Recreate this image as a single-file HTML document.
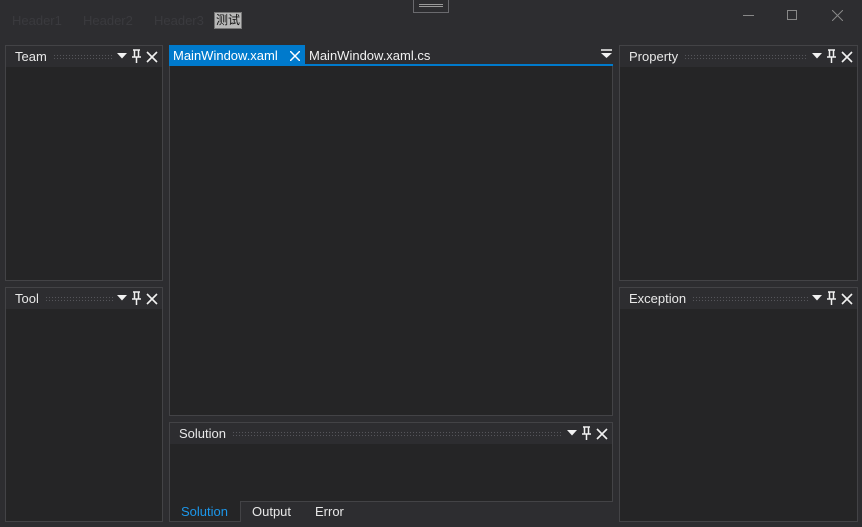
<!DOCTYPE html>
<html><head><style>
*{margin:0;padding:0;box-sizing:border-box}
body{width:862px;height:527px;background:#2d2d30;font-family:"Liberation Sans","Noto Sans CJK SC",sans-serif;font-size:13px;color:#f1f1f1;position:relative;overflow:hidden}
.a{position:absolute}
.panel{position:absolute;border:1px solid #434346;background:#252526}
.hd{position:absolute;left:0;right:0;top:0;height:21px;background:#2d2d30;display:flex;align-items:center;padding-left:9px}
.hd .t{color:#e8e8e8;margin-right:6px}
.hd .dots{flex:1;height:6px;background-image:radial-gradient(#55555a 0.6px,transparent 0.8px);background-size:3px 3px;margin-right:4px}
.hd svg{margin-right:4px}
.menu{font-size:13px;color:#3a3a3e;position:absolute;top:13px}
</style></head><body>
<div class="menu" style="left:12px">Header1</div>
<div class="menu" style="left:83px">Header2</div>
<div class="menu" style="left:154px">Header3</div>
<div class="a" style="left:214px;top:12px;width:28px;height:17px;background:#b8b8b8;border:1px solid #777;color:#111;font-size:12px;line-height:15px;text-align:center">测试</div>
<div class="a" style="left:413px;top:0;width:36px;height:13px;border:1px solid #6a6a6e;border-top:none"><div class="a" style="left:5px;top:4px;width:24px;height:3px;border-top:1px solid #999;border-bottom:1px solid #999"></div></div>
<div class="a" style="left:743px;top:15px;width:11px;height:1px;background:#888"></div>
<div class="a" style="left:787px;top:10px;width:10px;height:10px;border:1px solid #888"></div>
<svg class="a" style="left:832px;top:10px" width="11" height="11"><path d="M0 0L11 11M11 0L0 11" stroke="#888" stroke-width="1"/></svg>

<svg width="0" height="0" style="position:absolute"><defs>
<g id="icons"><path d="M0 4h10l-5 5.5z" fill="#f1f1f1"/><path d="M16 1h7M17.5 1v7h4V1M15 8h9M19.5 8v6" stroke="#f1f1f1" stroke-width="1.5" fill="none"/><path d="M30 3l10 10M40 3l-10 10" stroke="#f1f1f1" stroke-width="1.6"/></g>
</defs></svg>

<div class="panel" style="left:5px;top:45px;width:158px;height:236px"><div class="hd"><span class="t">Team</span><span class="dots"></span><svg width="41" height="15"><use href="#icons"/></svg></div></div>
<div class="panel" style="left:5px;top:287px;width:158px;height:235px"><div class="hd"><span class="t">Tool</span><span class="dots"></span><svg width="41" height="15"><use href="#icons"/></svg></div></div>
<div class="panel" style="left:619px;top:45px;width:239px;height:236px"><div class="hd"><span class="t">Property</span><span class="dots"></span><svg width="41" height="15"><use href="#icons"/></svg></div></div>
<div class="panel" style="left:619px;top:287px;width:239px;height:235px"><div class="hd"><span class="t">Exception</span><span class="dots"></span><svg width="41" height="15"><use href="#icons"/></svg></div></div>

<div class="a" style="left:169px;top:45px;width:136px;height:20px;background:#007acc;color:#fff;padding:3px 0 0 4px">MainWindow.xaml</div>
<svg class="a" style="left:290px;top:51px" width="10" height="10"><path d="M0 0L10 10M10 0L0 10" stroke="#fff" stroke-width="1.5"/></svg>
<div class="a" style="left:309px;top:48px;color:#f1f1f1">MainWindow.xaml.cs</div>
<svg class="a" style="left:601px;top:49px" width="11" height="11"><path d="M0 1h11" stroke="#f1f1f1" stroke-width="1.5"/><path d="M0 4h11l-5.5 5z" fill="#f1f1f1"/></svg>
<div class="a" style="left:169px;top:64px;width:444px;height:2px;background:#007acc"></div>
<div class="a" style="left:169px;top:66px;width:444px;height:350px;background:#252526;border:1px solid #434346;border-top:none"></div>

<div class="panel" style="left:169px;top:422px;width:444px;height:80px"><div class="hd"><span class="t">Solution</span><span class="dots"></span><svg width="41" height="15"><use href="#icons"/></svg></div></div>
<div class="a" style="left:169px;top:501px;width:72px;height:21px;background:#252526;border:1px solid #434346;border-top:none;color:#1c97ea;padding:3px 0 0 11px">Solution</div>
<div class="a" style="left:252px;top:504px;color:#e8e8e8">Output</div>
<div class="a" style="left:315px;top:504px;color:#e8e8e8">Error</div>
</body></html>
